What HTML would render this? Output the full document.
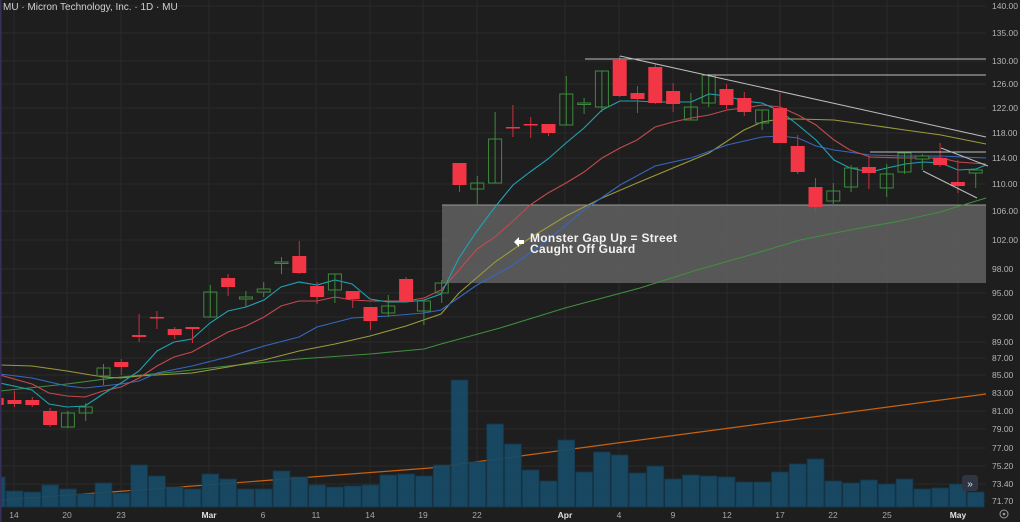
<!DOCTYPE html>
<html><head><meta charset="utf-8"><style>
html,body{margin:0;padding:0;background:#1e1e1e;width:1020px;height:522px;overflow:hidden;font-family:"Liberation Sans",sans-serif}
#c{position:absolute;left:0;top:0}
</style></head><body>
<svg id="c" width="1020" height="522" viewBox="0 0 1020 522" xmlns="http://www.w3.org/2000/svg">
<rect width="1020" height="522" fill="#1e1e1e"/>
<g id="grid" stroke="#2a2a2a" stroke-width="1"></g>
<polyline points="0,500 180,487 430,468 700,432 986,394" fill="none" stroke="#c8620f" stroke-width="1.2"/>
<g id="vol"></g>
<rect x="442" y="205" width="544" height="78" fill="#5c5c5c" fill-opacity="0.92"/>
<line x1="442" y1="205" x2="986" y2="205" stroke="#9a9a9a" stroke-width="1"/>
<g id="ma" fill="none" stroke-width="1.1"></g>
<g id="cdl"></g>
<g stroke="#bdbdbd" stroke-width="1" fill="none">
<line x1="585" y1="59" x2="986" y2="59"/>
<line x1="703" y1="75" x2="986" y2="75"/>
<line x1="870" y1="152" x2="986" y2="152"/>
<line x1="620" y1="56" x2="986" y2="137"/>
<line x1="941" y1="148" x2="988" y2="166"/>
<line x1="923" y1="171" x2="977" y2="198"/>
</g>
<path d="M514 242 l5 -5 v3 h5 v4 h-5 v3 z" fill="#fff"/>
<text x="530" y="242" fill="#f2f2f2" font-size="12" font-weight="bold" letter-spacing="0.3">Monster Gap Up = Street</text>
<text x="530" y="253" fill="#f2f2f2" font-size="12" font-weight="bold" letter-spacing="0.3">Caught Off Guard</text>
<text x="3" y="10" fill="#cfcfcf" font-size="10">MU · Micron Technology, Inc. · 1D · MU</text>
<g fill="#b5b5b5" font-size="8.5" text-anchor="start">
<text x="992" y="9">140.00</text><text x="992" y="36">135.00</text><text x="992" y="64">130.00</text>
<text x="992" y="87">126.00</text><text x="992" y="111">122.00</text><text x="992" y="136">118.00</text>
<text x="992" y="161">114.00</text><text x="992" y="187">110.00</text><text x="992" y="214">106.00</text>
<text x="992" y="243">102.00</text><text x="992" y="272">98.00</text><text x="992" y="296">95.00</text>
<text x="992" y="320">92.00</text><text x="992" y="345">89.00</text><text x="992" y="361">87.00</text>
<text x="992" y="378">85.00</text><text x="992" y="396">83.00</text><text x="992" y="414">81.00</text>
<text x="992" y="432">79.00</text><text x="992" y="451">77.00</text><text x="992" y="469">75.20</text>
<text x="992" y="487">73.40</text><text x="992" y="504">71.70</text>
</g>
<g fill="#a8a8a8" font-size="8.5" text-anchor="middle">
<text x="14" y="518">14</text><text x="67" y="518">20</text><text x="121" y="518">23</text>
<text x="209" y="518" fill="#e0e0e0" font-weight="bold">Mar</text><text x="263" y="518">6</text><text x="316" y="518">11</text>
<text x="370" y="518">14</text><text x="423" y="518">19</text><text x="477" y="518">22</text>
<text x="565" y="518" fill="#e0e0e0" font-weight="bold">Apr</text><text x="619" y="518">4</text><text x="673" y="518">9</text>
<text x="727" y="518">12</text><text x="780" y="518">17</text><text x="833" y="518">22</text>
<text x="887" y="518">25</text><text x="958" y="518" fill="#e0e0e0" font-weight="bold">May</text>
</g>
<rect x="962" y="475" width="16" height="16" rx="3" fill="#2e3440"/>
<text x="970" y="487" fill="#dfe4ee" font-size="10" text-anchor="middle">»</text>
<circle cx="1004" cy="514" r="4" fill="none" stroke="#999" stroke-width="1"/>
<circle cx="1004" cy="514" r="1.3" fill="#999"/>
<rect x="0" y="0" width="1.5" height="522" fill="#3a2f5a"/>
</svg>
<script>
var NS="http://www.w3.org/2000/svg";
function el(p,t,a){var e=document.createElementNS(NS,t);for(var k in a)e.setAttribute(k,a[k]);p.appendChild(e);return e;}
var g=document.getElementById('grid');
[14,67,121,209,263,316,370,423,477,565,619,673,727,780,833,887,958].forEach(function(x){el(g,'line',{x1:x,y1:0,x2:x,y2:508});});
[6,33,61,84,108,133,158,184,211,240,269,293,317,342,358,375,393,411,429,448,466,484,501].forEach(function(y){el(g,'line',{x1:0,y1:y,x2:986,y2:y});});
function X(i){return 14.5+17.8*i;}
var vt=[477,491,492,485,489,494,483,493,465,476,487,489,474,479,489,489,471,477,485,487,486,485,475,474,476,465,380,462,424,444,470,481,440,472,452,455,473,466,479,475,476,477,482,482,472,464,459,481,483,480,484,479,489,488,484,492];
var v=document.getElementById('vol');
vt.forEach(function(t,k){var i=k-1;el(v,'rect',{x:X(i)-8.4,y:t,width:16.8,height:507-t,fill:'#174a66','fill-opacity':0.93,stroke:'#14374b','stroke-width':0.8});});
var ma=document.getElementById('ma');
function pl(c,pts){el(ma,'polyline',{points:pts,stroke:c});}
pl('#3f8f3f',"0,391 67,384 121,377 174,372 228,366 299,359 370,354 424,349 441,344 500,328 565,308 640,288 697,270 750,255 800,240 850,230 900,221 940,212 986,198");
pl('#9c9a3c',"0,365 32,366 67,371 103,377 121,378 139,376 174,374 192,373 228,367 264,360 299,351 335,344 370,336 406,326 441,314 459,293 495,262 530,238 566,216 602,198 637,183 673,168 709,153 744,130 762,122 780,119 798,119 834,120 870,125 905,130 941,135 986,144");
pl('#3568c0',"0,374 32,378 67,386 85,388 121,384 139,381 157,373 192,366 228,357 264,346 299,337 317,327 352,318 388,316 424,313 441,310 477,285 513,265 548,240 584,210 620,185 655,166 691,158 727,145 762,137 780,136 798,138 816,146 834,150 870,155 905,156 941,156 986,158");
pl('#c24a4f',"0,375 32,384 49,393 67,396 85,397 103,391 121,387 139,378 157,366 174,357 192,352 210,342 228,332 246,326 264,317 281,306 299,301 317,301 335,297 352,300 370,301 388,301 406,301 424,298 441,290 459,270 477,249 495,237 513,221 530,205 548,193 566,183 584,172 602,158 620,148 637,140 655,127 673,122 691,118 709,115 727,110 744,108 762,105 780,107 798,115 816,125 834,140 850,150 870,157 905,158 941,158 958,162 986,164");
pl('#1fa3b3',"0,383 32,390 49,404 67,407 85,406 103,394 121,383 139,371 157,351 174,342 192,339 210,323 228,311 246,307 264,300 281,287 299,282 317,285 335,280 352,284 370,299 388,302 406,302 424,300 441,294 459,258 477,231 495,207 513,185 530,172 548,159 566,143 584,128 602,110 620,101 637,101 655,102 673,102 691,102 709,94 727,96 744,101 762,103 780,111 798,125 816,140 834,160 850,168 870,172 887,168 905,164 923,162 941,163 958,170 976,169 986,165");
var C=[[-1,398,405,396,407,0],[0,400,404,391,407,0],[1,400,405,397,407,0],[2,411,425,408,427,0],[3,413,427,411,428,1],[4,407,413,403,421,1],[5,368,376,364,385,1],[6,362,367,359,375,0],[7,335,337,314,342,0],[8,317,318,311,329,0],[9,329,335,327,339,0],[10,327,329,327,343,0],[11,292,317,285,317,1],[12,278,287,274,296,0],[13,297,299,291,307,1],[14,289,292,282,297,1],[15,262,263,257,274,1],[16,256,273,241,274,0],[17,286,297,282,304,0],[18,274,290,274,303,1],[19,291,299,291,308,0],[20,307,321,307,330,0],[21,306,313,295,317,1],[22,279,302,277,302,0],[23,301,311,300,325,1],[24,283,293,280,303,1],[25,163,185,163,192,0],[26,183,189,176,204,1],[27,139,183,112,183,1],[28,127,128,105,137,0],[29,124,125,117,138,0],[30,124,133,124,136,0],[31,94,125,76,125,1],[32,103,104,98,114,1],[33,71,107,71,112,1],[34,60,96,56,97,0],[35,93,99,86,113,0],[36,67,103,64,104,0],[37,91,104,83,112,0],[38,107,120,93,120,1],[39,75,103,74,107,1],[40,89,105,84,109,0],[41,98,112,92,116,0],[42,110,123,110,130,1],[43,108,143,93,143,0],[44,146,172,135,174,0],[45,187,207,178,213,0],[46,191,201,183,207,1],[47,168,187,165,192,1],[48,167,173,157,189,0],[49,174,188,164,197,1],[50,153,172,153,174,1],[51,156,159,154,170,1],[52,158,165,143,167,0],[53,182,186,160,193,0],[54,170,173,169,188,1]];
var cd=document.getElementById('cdl');
C.forEach(function(c){var x=X(c[0]);var col=c[5]?'#3d8a3d':'#f23645';
el(cd,'line',{x1:x,y1:c[3],x2:x,y2:c[4],stroke:c[5]?'#3d8a3d':'#c83040','stroke-width':1});
var h=Math.max(c[2]-c[1],1.5);
if(c[5])el(cd,'rect',{x:x-6.5,y:c[1],width:13,height:h,fill:'#1e1e1e','fill-opacity':h>3?0.01:1,stroke:col,'stroke-width':1});
else el(cd,'rect',{x:x-7,y:c[1],width:14,height:h,fill:col});});
</script>
</body></html>
